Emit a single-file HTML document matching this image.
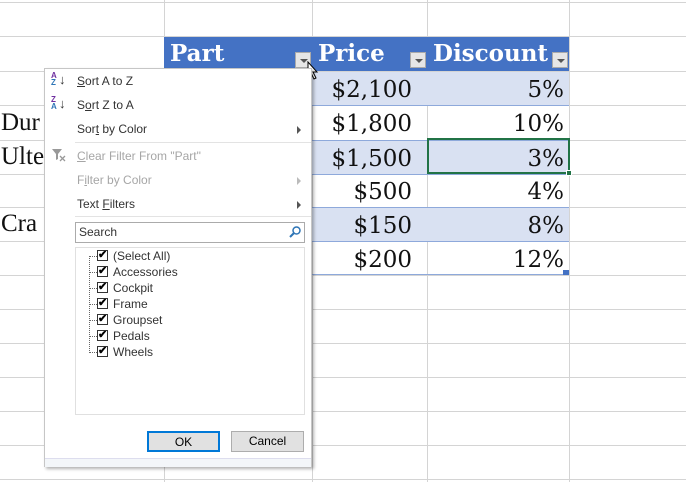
<!DOCTYPE html>
<html><head><style>
*{margin:0;padding:0;box-sizing:border-box}
body{width:686px;height:482px;background:#fff;position:relative;overflow:hidden;font-family:"Liberation Serif",serif}
.h{position:absolute;left:0;width:686px;height:1px;background:#d4d4d4}
.v{position:absolute;top:0;width:1px;height:482px;background:#d4d4d4}
.c{position:absolute;font-size:25px;color:#111;line-height:34px}
.n{font-family:"DejaVu Serif",serif;font-size:23px;line-height:36px}
.band{position:absolute;left:164px;width:405px;height:34px;background:#d9e1f2}
.bl{position:absolute;left:164px;width:405px;height:1px;background:#8ea9db}
.hd{position:absolute;left:164px;top:37px;width:405px;height:34px;background:#4472c4}
.ht{position:absolute;color:#fff;font-weight:bold;font-size:23px;top:36px;line-height:36px;font-family:"DejaVu Serif",serif}
.dd{position:absolute;top:52px;width:16px;height:16px;background:#e6e6e6;border:1px solid #aaa}
.dd:after{content:"";position:absolute;left:4px;top:6px;border-left:4px solid transparent;border-right:4px solid transparent;border-top:4px solid #555}
.m{position:absolute;left:44px;top:68px;width:268px;height:399px;background:#fff;border:1px solid #c6c6c6;box-shadow:2px 2px 3px rgba(0,0,0,.3);font-family:"Liberation Sans",sans-serif;font-size:12px;color:#333}
.it{position:absolute;left:32px;}
.g{color:#a6a6a6}
.ar{position:absolute;left:252px;width:0;height:0;border-top:4px solid transparent;border-bottom:4px solid transparent;border-left:4px solid #555}
.sep{position:absolute;left:30px;width:236px;height:1px;background:#e3e3e3}
.cb{position:absolute;left:52px;width:11px;height:11px;border:1px solid #333;background:#fff;font-size:11px;line-height:9px;text-align:center;font-weight:bold;color:#000}
.lb{position:absolute;left:68px}
.btn{position:absolute;top:362px;height:21px;background:#e1e1e1;border:1px solid #adadad;text-align:center;line-height:19px;color:#000}
</style></head><body>
<div class="h" style="top:2px"></div><div class="h" style="top:36px"></div><div class="h" style="top:71px"></div><div class="h" style="top:105px"></div><div class="h" style="top:140px"></div><div class="h" style="top:174px"></div><div class="h" style="top:207px"></div><div class="h" style="top:241px"></div><div class="h" style="top:275px"></div><div class="h" style="top:309px"></div><div class="h" style="top:343px"></div><div class="h" style="top:377px"></div><div class="h" style="top:411px"></div><div class="h" style="top:445px"></div><div class="h" style="top:479px"></div>
<div class="v" style="left:164px"></div><div class="v" style="left:312px"></div><div class="v" style="left:427px"></div><div class="v" style="left:569px"></div>
<div class="band" style="top:72px"></div><div class="band" style="top:141px"></div><div class="band" style="top:208px"></div>
<div class="bl" style="top:105px"></div><div class="bl" style="top:140px"></div><div class="bl" style="top:174px"></div><div class="bl" style="top:207px"></div><div class="bl" style="top:241px"></div><div class="bl" style="top:274px"></div>
<div class="hd"></div>
<div class="ht" style="left:170px">Part</div><div class="ht" style="left:318px">Price</div><div class="ht" style="left:433px">Discount</div>
<div class="dd" style="left:295px"></div><div class="dd" style="left:410px"></div><div class="dd" style="left:552px"></div>
<div class="c" style="left:1px;top:106px">Dur</div><div class="c" style="left:1px;top:140px">Ulte</div><div class="c" style="left:1px;top:207px">Cra</div>
<div class="c n" style="right:274px;top:72px">$2,100</div><div class="c n" style="right:274px;top:106px">$1,800</div><div class="c n" style="right:274px;top:141px">$1,500</div><div class="c n" style="right:274px;top:174px">$500</div><div class="c n" style="right:274px;top:208px">$150</div><div class="c n" style="right:274px;top:242px">$200</div>
<div class="c n" style="right:122px;top:72px">5%</div><div class="c n" style="right:122px;top:106px">10%</div><div class="c n" style="right:122px;top:141px">3%</div><div class="c n" style="right:122px;top:174px">4%</div><div class="c n" style="right:122px;top:208px">8%</div><div class="c n" style="right:122px;top:242px">12%</div>
<div style="position:absolute;left:427px;top:138px;width:143px;height:36px;border:2px solid #217346"></div>
<div style="position:absolute;left:566px;top:170px;width:6px;height:6px;background:#217346;border:1px solid #fff"></div>
<div style="position:absolute;left:563px;top:270px;width:6px;height:5px;background:#4472c4"></div>
<svg style="position:absolute;left:307px;top:61px" width="12" height="20"><path d="M1 1 L1 15 L4 12 L7 18 L9 17 L6 11 L10 11 Z" fill="#fff" stroke="#000"/></svg>
<div class="m">
<div style="position:absolute;left:6px;top:3px;font-size:8px;line-height:7px;color:#7030a0;font-weight:bold">A<br><span style="color:#2e75b6">Z</span></div><div style="position:absolute;left:14px;top:3px;font-size:13px">↓</div>
<div style="position:absolute;left:6px;top:27px;font-size:8px;line-height:7px;color:#7030a0;font-weight:bold">Z<br><span style="color:#2e75b6">A</span></div><div style="position:absolute;left:14px;top:27px;font-size:13px">↓</div>
<div class="it" style="top:5px"><u>S</u>ort A to Z</div>
<div class="it" style="top:29px">S<u>o</u>rt Z to A</div>
<div class="it" style="top:53px">Sor<u>t</u> by Color</div><div class="ar" style="top:57px"></div>
<div class="sep" style="top:73px"></div>
<svg style="position:absolute;left:6px;top:79px" width="16" height="14"><path d="M1 1 H11 L7 6 V11 L5 12 V6 Z" fill="#999"/><path d="M9 8 L14 13 M14 8 L9 13" stroke="#999" stroke-width="1.3"/></svg>
<div class="it g" style="top:80px"><u>C</u>lear Filter From "Part"</div>
<div class="it g" style="top:104px">F<u>i</u>lter by Color</div><div class="ar" style="top:108px;border-left-color:#bbb"></div>
<div class="it" style="top:128px">Text <u>F</u>ilters</div><div class="ar" style="top:132px"></div>
<div class="sep" style="top:147px"></div>
<div style="position:absolute;left:30px;top:153px;width:230px;height:21px;border:1px solid #ababab;padding:2px 3px">Search<svg style="position:absolute;right:3px;top:3px" width="12" height="13"><circle cx="7.5" cy="4.5" r="3.5" fill="none" stroke="#2e75b6" stroke-width="1.5"/><path d="M5 7 L1 11" stroke="#2e75b6" stroke-width="2"/></svg></div>
<div style="position:absolute;left:30px;top:178px;width:230px;height:168px;border:1px solid #e0e0e0"></div>
<div style="position:absolute;left:44px;top:187px;width:1px;height:97px;border-left:1px dotted #666"></div>
<div style="position:absolute;left:44px;top:187px;width:8px;border-top:1px dotted #666"></div><div class="cb" style="top:181px">✔</div><div class="lb" style="top:180px">(Select All)</div>
<div style="position:absolute;left:44px;top:203px;width:8px;border-top:1px dotted #666"></div><div class="cb" style="top:197px">✔</div><div class="lb" style="top:196px">Accessories</div>
<div style="position:absolute;left:44px;top:219px;width:8px;border-top:1px dotted #666"></div><div class="cb" style="top:213px">✔</div><div class="lb" style="top:212px">Cockpit</div>
<div style="position:absolute;left:44px;top:235px;width:8px;border-top:1px dotted #666"></div><div class="cb" style="top:229px">✔</div><div class="lb" style="top:228px">Frame</div>
<div style="position:absolute;left:44px;top:251px;width:8px;border-top:1px dotted #666"></div><div class="cb" style="top:245px">✔</div><div class="lb" style="top:244px">Groupset</div>
<div style="position:absolute;left:44px;top:267px;width:8px;border-top:1px dotted #666"></div><div class="cb" style="top:261px">✔</div><div class="lb" style="top:260px">Pedals</div>
<div style="position:absolute;left:44px;top:283px;width:8px;border-top:1px dotted #666"></div><div class="cb" style="top:277px">✔</div><div class="lb" style="top:276px">Wheels</div>
<div class="btn" style="left:102px;width:73px;border:2px solid #0078d7">OK</div>
<div class="btn" style="left:186px;width:73px">Cancel</div>
<div style="position:absolute;left:0;top:389px;width:266px;height:9px;background:#f3f6f9;border-top:1px solid #dde"></div>
</div>
</body></html>
